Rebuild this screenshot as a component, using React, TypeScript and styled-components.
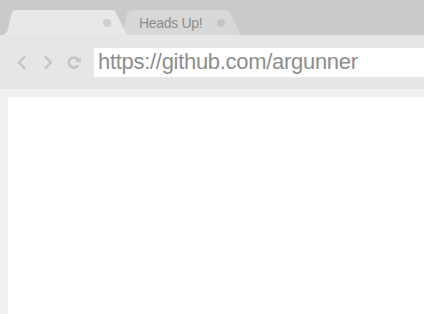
import React from "react";
import styled, {createGlobalStyle} from "styled-components";

const GlobalStyle = createGlobalStyle`
  html, body {
    margin: 0;
    padding: 0;
    background: #f0f0f0;
  }
`;

const Browser = styled.div`
  display: flex;
  flex-direction: column;
  width: 424px;
  height: 314px;
  overflow: hidden;
  font-family: "Liberation Sans", Arial, sans-serif;
`;

const TabStrip = styled.div`
  display: flex;
  align-items: flex-end;
  height: 35px;
  background: #cacaca;
`;

const tabPath = (w: number) =>
    `path('M0,25 C5,25 7,23 8,19 L11,5 C12,1 14,0 18,0 L${w - 18},0 C${w - 14},0 ${w - 12},1 ${w - 11},5 L${w - 3},21 C${w - 2},24 ${w - 1},25 ${w},25 Z')`;

const Tab = styled.div<{ $active?: boolean; $width: number; $overlap?: number }>`
  position: relative;
  z-index: ${p => (p.$active ? 2 : 1)};
  display: flex;
  align-items: center;
  box-sizing: border-box;
  width: ${p => p.$width}px;
  height: 25px;
  margin-left: ${p => (p.$overlap ? -p.$overlap : 0)}px;
  padding: 0 17px 0 23px;
  background: ${p => (p.$active ? "#e8e8e8" : "#d8d8d8")};
  clip-path: ${p => tabPath(p.$width)};
`;

const TabTitle = styled.span`
  font-size: 14px;
  letter-spacing: -0.3px;
  color: #8e8e8e;
  white-space: nowrap;
`;

const Dot = styled.span<{ $shade: string }>`
  width: 8px;
  height: 8px;
  margin-left: auto;
  border-radius: 50%;
  background: ${p => p.$shade};
`;

const Toolbar = styled.div`
  display: flex;
  align-items: center;
  height: 54px;
  padding-left: 15px;
  background: #e6e6e6;
`;

const NavButton = styled.span`
  display: flex;
  align-items: center;
  justify-content: center;
  width: 14px;
  height: 16px;
  margin-right: 12px;
  color: #c3c3c3;
`;

const AddressBar = styled.div`
  flex: 1;
  display: flex;
  align-items: center;
  height: 29px;
  margin-left: 1px;
  padding-left: 4px;
  background: #ffffff;
  font-size: 22px;
  letter-spacing: -0.3px;
  color: #8e8e8e;
  white-space: nowrap;
  overflow: hidden;
`;

const Viewport = styled.div`
  flex: 1;
  display: flex;
  padding: 8px 0 0 8px;
  background: #f0f0f0;
`;

const Page = styled.div`
  flex: 1;
  background: #ffffff;
`;

const Back = () => (
    <svg width="10" height="15" viewBox="0 0 10 15">
        <path d="M8 1.5 L2 7.5 L8 13.5" fill="none" stroke="currentColor" strokeWidth="2.2"/>
    </svg>
);

const Forward = () => (
    <svg width="10" height="15" viewBox="0 0 10 15">
        <path d="M2 1.5 L8 7.5 L2 13.5" fill="none" stroke="currentColor" strokeWidth="2.2"/>
    </svg>
);

const Reload = () => (
    <svg width="15" height="15" viewBox="0 0 15 15">
        <path d="M12.6 6.4 A5.4 5.4 0 1 0 11.8 10.6" fill="none" stroke="currentColor" strokeWidth="2.8"/>
        <path d="M8.8 7.2 L14.6 7.2 L14.6 1.4 Z" fill="currentColor"/>
    </svg>
);

export default function App() {
    return (
        <Browser>
            <GlobalStyle/>
            <TabStrip>
                <Tab $active $width={128}>
                    <Dot $shade="#d0d0d0"/>
                </Tab>
                <Tab $width={126} $overlap={12}>
                    <TabTitle>Heads Up!</TabTitle>
                    <Dot $shade="#c4c4c4"/>
                </Tab>
            </TabStrip>
            <Toolbar>
                <NavButton><Back/></NavButton>
                <NavButton><Forward/></NavButton>
                <NavButton><Reload/></NavButton>
                <AddressBar>https://github.com/argunner</AddressBar>
            </Toolbar>
            <Viewport>
                <Page/>
            </Viewport>
        </Browser>
    );
}
